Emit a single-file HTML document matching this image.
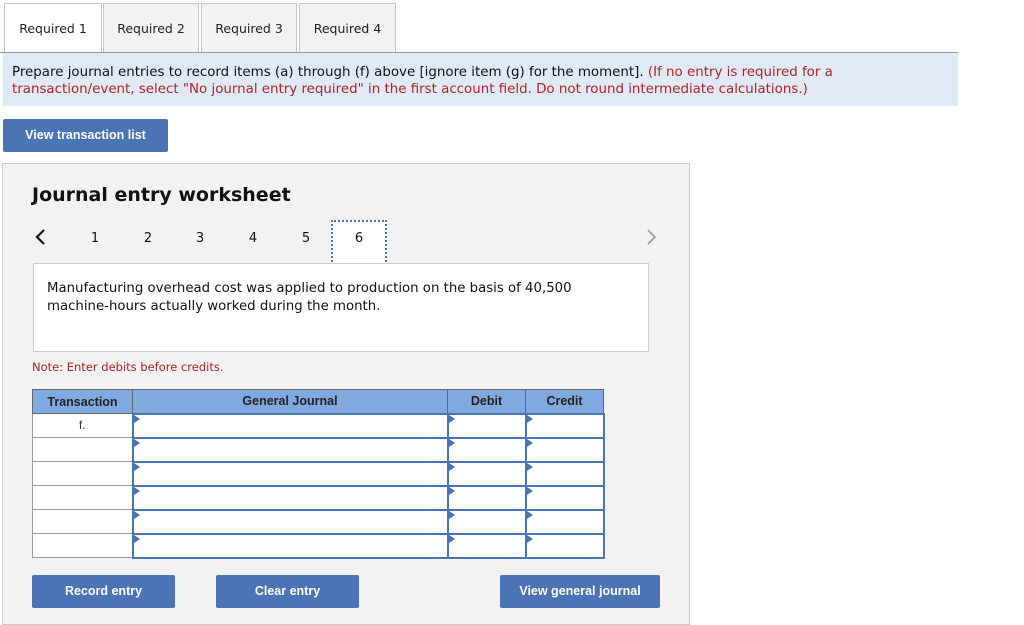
<!DOCTYPE html>
<html><head><style>
body{margin:0;width:1024px;height:618px;background:#fff;position:relative;overflow:hidden;font-family:"DejaVu Sans",Verdana,sans-serif;}
.a{position:absolute;}
.tab{position:absolute;top:3px;height:49px;background:#f2f2f2;border:1px solid #c8c8c8;border-bottom:none;box-sizing:border-box;font-size:12.5px;color:#222;text-align:center;line-height:50px;}
.btn{position:absolute;height:33px;background:#4a74b4;color:#fff;font:bold 12.5px "Liberation Sans",Arial,sans-serif;text-align:center;line-height:33px;border-radius:2px;}
.n{position:absolute;top:231px;font-size:13px;color:#111;width:20px;text-align:center;margin-left:-10px;}
table{border-collapse:collapse;position:absolute;left:32px;top:389px;table-layout:fixed;width:571px;}
td{padding:0;height:24px;box-sizing:border-box;}
th{height:24px;background:#80a9e0;font:bold 12.5px "Liberation Sans",Arial,sans-serif;color:#222;border:1px solid #666;padding:0;box-sizing:border-box;}
td.t{border:1px solid #999;background:#fff;font:12px "Liberation Sans",Arial,sans-serif;text-align:center;vertical-align:top;padding-top:4px;color:#333;}
td.i{border:2px solid #4a74b4;background:#fff;position:relative;}
td.i:before{content:"";position:absolute;left:0;top:0;border-left:6px solid #4a74b4;border-top:4px solid transparent;border-bottom:4px solid transparent;}
</style></head><body>
<div class="tab" style="left:4px;width:98px;background:#fff;height:50px;">Required 1</div>
<div class="tab" style="left:103px;width:96px;">Required 2</div>
<div class="tab" style="left:201px;width:96px;">Required 3</div>
<div class="tab" style="left:299px;width:97px;">Required 4</div>
<div class="a" style="left:0;top:52px;width:958px;height:1px;background:#999;"></div>
<div class="a" style="left:3px;top:53px;width:955px;height:53px;background:#dfeaf6;"></div>
<div class="a" style="left:12px;top:64px;font-size:13.4px;line-height:17px;color:#111;width:945px;white-space:nowrap;">Prepare journal entries to record items (a) through (f) above [ignore item (g) for the moment]. <span style="color:#b22222">(If no entry is required for a<br>transaction/event, select "No journal entry required" in the first account field. Do not round intermediate calculations.)</span></div>
<div class="btn" style="left:3px;top:119px;width:165px;">View transaction list</div>
<div class="a" style="left:2px;top:163px;width:686px;height:460px;background:#f2f2f2;border:1px solid #ccc;"></div>
<div class="a" style="left:32px;top:184px;font-size:19px;font-weight:bold;color:#111;">Journal entry worksheet</div>
<svg class="a" style="left:34px;top:229px" width="12" height="16"><path d="M10 1 L3 8 L10 15" fill="none" stroke="#111" stroke-width="2.2"/></svg>
<svg class="a" style="left:646px;top:229px" width="12" height="16"><path d="M2 1 L9 8 L2 15" fill="none" stroke="#999" stroke-width="1.6"/></svg>
<div class="n" style="left:95px">1</div><div class="n" style="left:148px">2</div><div class="n" style="left:200px">3</div><div class="n" style="left:253px">4</div><div class="n" style="left:306px">5</div>
<div class="a" style="left:331px;top:220px;width:56px;height:46px;background:#fff;border:2px dotted #4a74b4;box-sizing:border-box;"></div>
<div class="n" style="left:359px">6</div>
<div class="a" style="left:33px;top:263px;width:616px;height:89px;background:#fff;border:1px solid #ccc;box-sizing:border-box;"></div>
<div class="a" style="left:47px;top:280px;font-size:13.3px;line-height:18px;color:#111;white-space:nowrap;">Manufacturing overhead cost was applied to production on the basis of 40,500<br>machine-hours actually worked during the month.</div>
<div class="a" style="left:32px;top:360px;font-size:11.5px;color:#b22222;">Note: Enter debits before credits.</div>
<table>
<colgroup><col style="width:100px"><col style="width:315px"><col style="width:78px"><col style="width:78px"></colgroup>
<tr><th>Transaction</th><th>General Journal</th><th>Debit</th><th>Credit</th></tr>
<tr><td class="t">f.</td><td class="i"></td><td class="i"></td><td class="i"></td></tr>
<tr><td class="t"></td><td class="i"></td><td class="i"></td><td class="i"></td></tr>
<tr><td class="t"></td><td class="i"></td><td class="i"></td><td class="i"></td></tr>
<tr><td class="t"></td><td class="i"></td><td class="i"></td><td class="i"></td></tr>
<tr><td class="t"></td><td class="i"></td><td class="i"></td><td class="i"></td></tr>
<tr><td class="t"></td><td class="i"></td><td class="i"></td><td class="i"></td></tr>
</table>
<div class="btn" style="left:32px;top:575px;width:143px;">Record entry</div>
<div class="btn" style="left:216px;top:575px;width:143px;">Clear entry</div>
<div class="btn" style="left:500px;top:575px;width:160px;">View general journal</div>
</body></html>
